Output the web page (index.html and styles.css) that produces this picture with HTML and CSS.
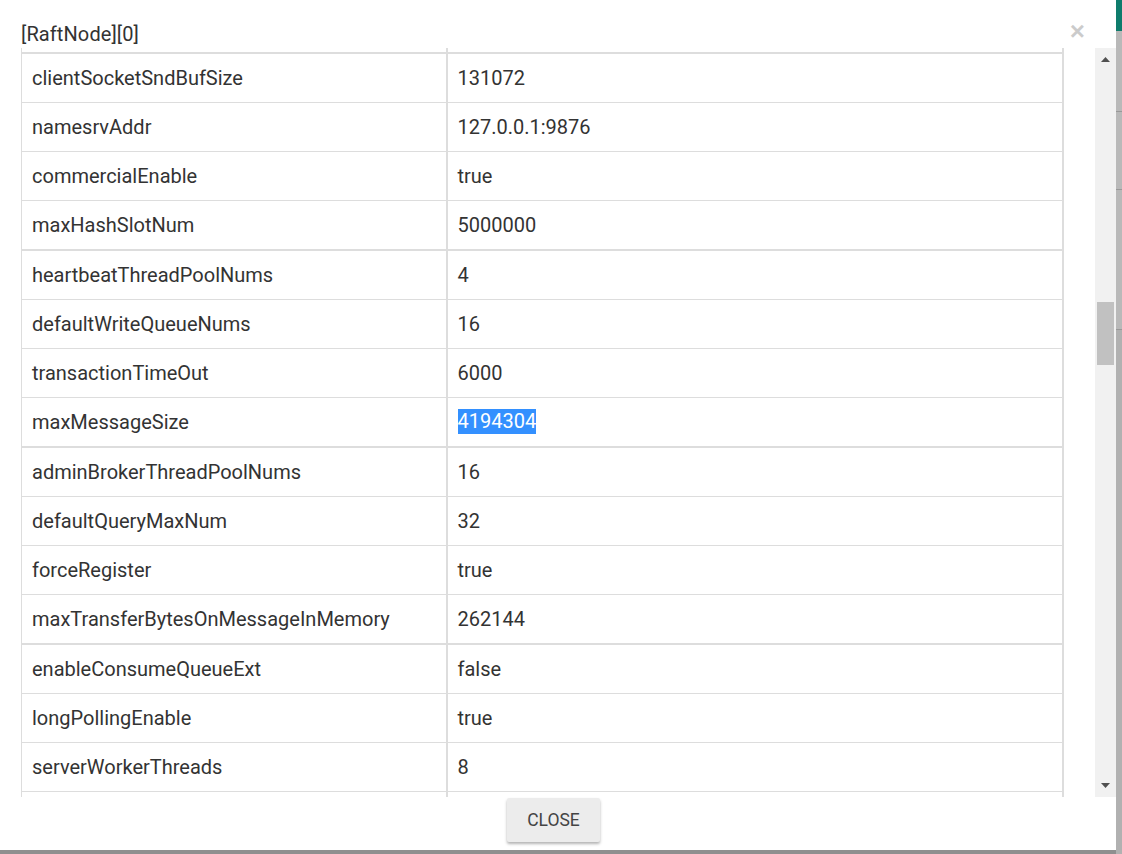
FILE: index.html
```html
<!DOCTYPE html>
<html>
<head>
<meta charset="utf-8">
<title>RaftNode</title>
<link rel="stylesheet" href="styles.css">
</head>
<body>
<div class="screen">
  <div class="modal">
    <div class="modal-header">
      <span class="modal-title">[RaftNode][0]</span>
      <span class="modal-close">×</span>
    </div>
    <div class="modal-body">
      <div class="viewport">
        <table class="cfg">
          <colgroup><col class="c-key"><col class="c-val"></colgroup>
          <tbody class="first">
            <tr><td class="k"></td><td class="v"></td></tr>
          </tbody>
          <tbody>
            <tr><td class="k">clientSocketSndBufSize</td><td class="v">131072</td></tr>
            <tr><td class="k">namesrvAddr</td><td class="v">127.0.0.1:9876</td></tr>
            <tr><td class="k">commercialEnable</td><td class="v">true</td></tr>
            <tr><td class="k">maxHashSlotNum</td><td class="v">5000000</td></tr>
          </tbody>
          <tbody>
            <tr><td class="k">heartbeatThreadPoolNums</td><td class="v">4</td></tr>
            <tr><td class="k">defaultWriteQueueNums</td><td class="v">16</td></tr>
            <tr><td class="k">transactionTimeOut</td><td class="v">6000</td></tr>
            <tr><td class="k">maxMessageSize</td><td class="v"><span class="sel">4194304</span></td></tr>
          </tbody>
          <tbody>
            <tr><td class="k">adminBrokerThreadPoolNums</td><td class="v">16</td></tr>
            <tr><td class="k">defaultQueryMaxNum</td><td class="v">32</td></tr>
            <tr><td class="k">forceRegister</td><td class="v">true</td></tr>
            <tr><td class="k">maxTransferBytesOnMessageInMemory</td><td class="v">262144</td></tr>
          </tbody>
          <tbody>
            <tr><td class="k">enableConsumeQueueExt</td><td class="v">false</td></tr>
            <tr><td class="k">longPollingEnable</td><td class="v">true</td></tr>
            <tr><td class="k">serverWorkerThreads</td><td class="v">8</td></tr>
            <tr><td class="k"></td><td class="v"></td></tr>
          </tbody>
        </table>
      </div>
      <div class="sbar">
        <div class="arr"><svg width="9" height="5" viewBox="0 0 9 5"><path d="M0 5 L4.5 0 L9 5 Z" fill="#505050"/></svg></div>
        <div class="track"><div class="thumb"></div></div>
        <div class="arr"><svg width="9" height="5" viewBox="0 0 9 5"><path d="M0 0 L9 0 L4.5 5 Z" fill="#505050"/></svg></div>
      </div>
    </div>
    <div class="modal-footer">
      <button class="btn-close">CLOSE</button>
    </div>
  </div>
  <div class="side">
    <div class="side-top"></div>
    <div class="side-seg s1"></div>
    <div class="side-seg s2"></div>
    <div class="side-seg s3"></div>
    <div class="side-seg s4"></div>
  </div>
</div>
</body>
</html>
```
FILE: styles.css
```css
html, body {
  margin: 0;
  padding: 0;
}
body {
  background: #8f8f8f;
  font-family: Roboto, "Liberation Sans", sans-serif;
  color: #333;
  overflow: hidden;
}
.screen {
  display: flex;
  width: 1122px;
  height: 854px;
  align-items: flex-start;
}
.modal {
  width: 1116px;
  height: 850px;
  background: #fff;
  display: flex;
  flex-direction: column;
  flex: none;
}
.modal-header {
  height: 48px;
  box-sizing: border-box;
  padding: 21px 0 0 21px;
  display: flex;
  align-items: flex-start;
  justify-content: space-between;
}
.modal-title {
  font-size: 20px;
  line-height: 27px;
  color: #333;
  letter-spacing: 0.1px;
}
.modal-close {
  font-family: "Liberation Sans", Arial, sans-serif;
  font-size: 26px;
  font-weight: bold;
  line-height: 20px;
  color: #000;
  opacity: 0.2;
  margin: 0 31px 0 0;
}
.modal-body {
  height: 749px;
  display: flex;
  padding-left: 21px;
}
.viewport {
  flex: 1;
  overflow: hidden;
}
.cfg {
  width: 1043px;
  border-collapse: collapse;
  table-layout: fixed;
  font-size: 20px;
  margin-top: -44px;
}
.c-key { width: 425px; }
.cfg td {
  height: 49px;
  box-sizing: border-box;
  padding: 0 10px;
  line-height: 24px;
  border-bottom: 1px solid #ddd;
  white-space: nowrap;
  color: #333;
}
.cfg tbody tr:last-child td {
  height: 50px;
}
.cfg tbody.first tr td {
  height: 49px;
}
.cfg td.k {
  border-left: 1px solid #ddd;
  border-right: 2px solid #ddd;
}
.cfg td.v {
  border-right: 2px solid #ddd;
  padding-left: 10px;
}
.cfg tbody {
  border-top: 2px solid #ddd;
}
.cfg tbody.first {
  border-top: none;
}
.sel {
  display: inline-block;
  background: #3390ff;
  color: #fff;
  line-height: 25px;
}
.sbar {
  width: 21px;
  flex: none;
  background: #f1f1f1;
  display: flex;
  flex-direction: column;
}
.arr {
  height: 23px;
  display: flex;
  align-items: center;
  justify-content: center;
}
.arr svg { display: block; }
.track {
  flex: 1;
}
.thumb {
  margin: 231px 0 0 2px;
  width: 17px;
  height: 63px;
  background: #c1c1c1;
}
.modal-footer {
  flex: 1;
  display: flex;
  justify-content: center;
  align-items: flex-start;
  padding-right: 9px;
}
.btn-close {
  margin-top: 1px;
  width: 93px;
  height: 44px;
  border: none;
  border-radius: 2px;
  background: #ececec;
  box-shadow: 0 2px 3px rgba(0, 0, 0, 0.3);
  font-family: Roboto, "Liberation Sans", sans-serif;
  font-size: 17.5px;
  color: #444;
  padding: 0;
}
.side {
  flex: 1;
  height: 854px;
  display: flex;
  flex-direction: column;
  background: #b1b1b1;
}
.side-top {
  height: 31px;
  background: #0e7c6c;
}
.side-seg {
  border-bottom: 1px solid #999;
  background: #b9b9b9;
}
.s1 { height: 80px; }
.s2 { height: 77px; }
.s3 { height: 139px; }
.s4 { flex: 1; border-bottom: none; background: #b1b1b1; }
```
